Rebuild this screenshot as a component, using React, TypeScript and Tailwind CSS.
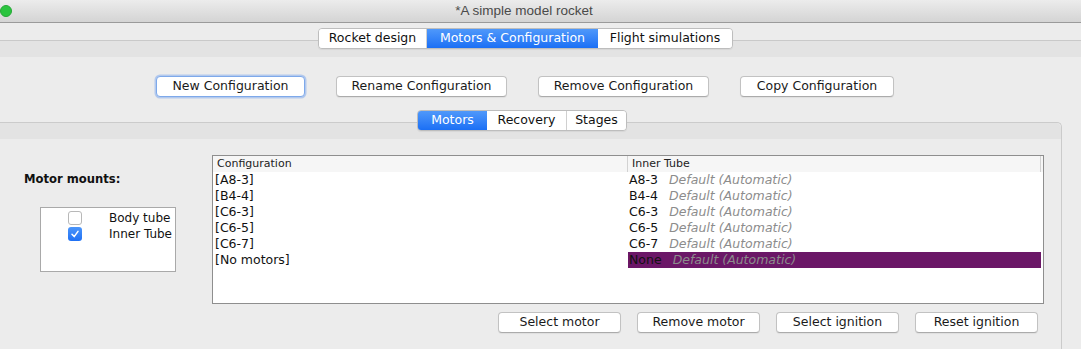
import React from "react";

const font = { fontFamily: '"DejaVu Sans", sans-serif' };

const rows = [
  { cfg: "[A8-3]", motor: "A8-3" },
  { cfg: "[B4-4]", motor: "B4-4" },
  { cfg: "[C6-3]", motor: "C6-3" },
  { cfg: "[C6-5]", motor: "C6-5" },
  { cfg: "[C6-7]", motor: "C6-7" },
  { cfg: "[No motors]", motor: "None", selected: true },
];

function Button({ label, width, focused }: { label: string; width: string; focused?: boolean }) {
  return (
    <button
      className={`${width} h-[21px] flex items-center justify-center rounded-[4px] bg-white text-[12.5px] text-[#1a1a1a] ${
        focused
          ? "border border-[#7ea9ea] shadow-[0_0_0_1.5px_rgba(110,160,240,0.45)]"
          : "border border-[#c2c2c2] border-b-[#ababab] shadow-[0_1px_1px_rgba(0,0,0,0.06)]"
      }`}
    >
      {label}
    </button>
  );
}

function Segment({ label, width, active, last }: { label: string; width: string; active?: boolean; last?: boolean }) {
  return (
    <div
      className={`${width} h-full flex items-center justify-center text-[12.5px] ${
        active ? "bg-gradient-to-b from-[#4f98fa] to-[#1a6ff5] text-white" : "bg-white text-[#111]"
      } ${!last && !active ? "border-r border-[#d0d0d0]" : ""}`}
    >
      {label}
    </div>
  );
}

function Checkbox({ checked }: { checked?: boolean }) {
  if (checked) {
    return (
      <div className="w-[14px] h-[14px] rounded-[3px] bg-gradient-to-b from-[#4b95fa] to-[#1e70f4] flex items-center justify-center">
        <svg width="10" height="10" viewBox="0 0 10 10">
          <polyline points="2,5.2 4.2,7.6 8,2.4" fill="none" stroke="white" strokeWidth="1.5" strokeLinecap="round" strokeLinejoin="round" />
        </svg>
      </div>
    );
  }
  return <div className="w-[14px] h-[14px] rounded-[3px] bg-white border border-[#b8b8b8]" />;
}

export default function App() {
  return (
    <div className="w-[1081px] h-[349px] overflow-hidden bg-[#ececec]" style={font}>
      {/* Title bar */}
      <div className="relative h-[23px] bg-gradient-to-b from-[#ececec] to-[#d4d4d4] border-b border-[#9a9a9a] flex items-center justify-center pr-[33px]">
        <div className="absolute left-0 top-[5px] w-[12px] h-[12px] rounded-full bg-[#2bc43f] border border-[#25a836]" />
        <span className="text-[13.5px] text-[#4a4a4a]" style={{ fontFamily: '"Liberation Sans", sans-serif' }}>
          *A simple model rocket
        </span>
      </div>

      {/* Main tabs */}
      <div className="pt-[5px] pl-[318px] relative z-10">
        <div className="flex h-[21px] w-fit rounded-[4px] border border-[#bdbdbd] overflow-hidden shadow-[0_1px_1px_rgba(0,0,0,0.06)]">
          <Segment label="Rocket design" width="w-[108px]" />
          <Segment label="Motors & Configuration" width="w-[171px]" active />
          <Segment label="Flight simulations" width="w-[134px]" last />
        </div>
      </div>

      <div className="-mt-[9px] border-t border-[#c9c9c9]">
        <div className="h-[16px] bg-[#e3e3e3]" />

        {/* Configuration buttons */}
        <div className="flex gap-[31px] pl-[156px] pt-[19px]">
          <Button label="New Configuration" width="w-[149px]" focused />
          <Button label="Rename Configuration" width="w-[171px]" />
          <Button label="Remove Configuration" width="w-[171px]" />
          <Button label="Copy Configuration" width="w-[154px]" />
        </div>

        {/* Sub tabs */}
        <div className="pt-[13px] pl-[417px] relative z-10">
          <div className="flex h-[21px] w-fit rounded-[4px] border border-[#bdbdbd] overflow-hidden shadow-[0_1px_1px_rgba(0,0,0,0.06)]">
            <Segment label="Motors" width="w-[69px]" active />
            <Segment label="Recovery" width="w-[80px]" />
            <Segment label="Stages" width="w-[59px]" last />
          </div>
        </div>

        {/* Inner panel */}
        <div className="-mt-[9px] w-[1062px] h-[240px] border-t border-r border-[#cbcbcb] rounded-tr-[5px]">
          <div className="h-[16px] bg-[#e3e3e3] rounded-tr-[5px]" />
          <div className="flex pt-[16px]">
            {/* Motor mounts */}
            <div className="w-[212px] shrink-0">
              <div className="pl-[24px] mt-[17px] h-[16px] flex items-center text-[11.6px] font-bold text-[#111]">
                Motor mounts:
              </div>
              <div className="ml-[40px] mt-[19px] w-[136px] h-[65px] bg-white border border-[#a9a9a9] pt-[2px]">
                {[
                  { label: "Body tube", checked: false },
                  { label: "Inner Tube", checked: true },
                ].map((m) => (
                  <div key={m.label} className="flex items-center h-[16px]">
                    <div className="w-[68px] flex justify-end pr-[27px] pl-[26px]">
                      <Checkbox checked={m.checked} />
                    </div>
                    <span className="text-[12px] text-[#111]">{m.label}</span>
                  </div>
                ))}
              </div>
            </div>

            {/* Table and motor buttons */}
            <div className="flex flex-col">
              <div className="w-[832px] h-[149px] bg-white border border-[#8e8e8e]">
                <div className="flex h-[16px] bg-[#f6f6f6] text-[11px] text-[#222]">
                  <div className="w-[415px] pl-[4px] flex items-center border-r border-[#d2d2d2]">Configuration</div>
                  <div className="w-[413px] pl-[4px] flex items-center border-r border-[#d2d2d2]">Inner Tube</div>
                </div>
                {rows.map((r) => (
                  <div key={r.cfg} className="flex h-[16px] items-center text-[12.5px]">
                    <div className="w-[415px] pl-[2px] text-[#111]">{r.cfg}</div>
                    <div className={`w-[413px] h-full flex items-center pl-[1px] ${r.selected ? "bg-[#6b1767]" : ""}`}>
                      <span className="text-[#111]">{r.motor}</span>
                      <span className="ml-[11px] italic text-[#8c8c8c]">Default (Automatic)</span>
                    </div>
                  </div>
                ))}
              </div>
              <div className="flex gap-[16px] pl-[286px] pt-[8px]">
                <Button label="Select motor" width="w-[123px]" />
                <Button label="Remove motor" width="w-[123px]" />
                <Button label="Select ignition" width="w-[123px]" />
                <Button label="Reset ignition" width="w-[123px]" />
              </div>
            </div>
          </div>
        </div>
      </div>
    </div>
  );
}
